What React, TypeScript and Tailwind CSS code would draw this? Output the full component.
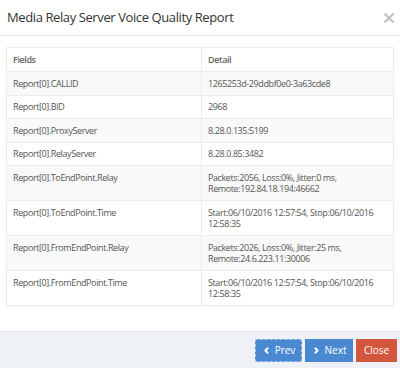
import { ChevronLeft, ChevronRight } from 'lucide-react';

const rows = [
  { f: 'Report[0].CALLID', d: '1265253d-29ddbf0e0-3a63cde8' },
  { f: 'Report[0].BID', d: '2968' },
  { f: 'Report[0].ProxyServer', d: '8.28.0.135:5199' },
  { f: 'Report[0].RelayServer', d: '8.28.0.85:3482' },
  { f: 'Report[0].ToEndPoint.Relay', d: 'Packets:2056, Loss:0%, Jitter:0 ms, Remote:192.84.18.194:46662' },
  { f: 'Report[0].ToEndPoint.Time', d: 'Start:06/10/2016 12:57:54, Stop:06/10/2016 12:58:35' },
  { f: 'Report[0].FromEndPoint.Relay', d: 'Packets:2026, Loss:0%, Jitter:25 ms, Remote:24.6.223.11:30006' },
  { f: 'Report[0].FromEndPoint.Time', d: 'Start:06/10/2016 12:57:54, Stop:06/10/2016 12:58:35' },
];

export default function App() {
  return (
    <div className="w-[400px] h-[368px] bg-white flex flex-col text-[#555] font-['Open_Sans',sans-serif] overflow-hidden">
      <div className="h-[36px] flex items-center justify-between pl-[7px] pr-[6px] border-b border-[#e8e8e8]">
        <h1 className="text-[13px] text-[#333] tracking-[-0.4px] pt-[1px]">Media Relay Server Voice Quality Report</h1>
        <svg width="12" height="12" viewBox="0 0 12 12" className="mr-[-1px]">
          <path d="M1.5 1.5 L10.5 10.5 M10.5 1.5 L1.5 10.5" stroke="#c4c4c4" strokeWidth="2.4" />
        </svg>
      </div>
      <div className="flex-1 px-[6px] pt-[11px]">
        <table className="w-full border border-[#ebebeb] border-collapse text-[9px] leading-[11.5px] tracking-[-0.4px]">
          <thead>
            <tr className="h-[24px]">
              <th className="w-[195px] text-left font-semibold text-[#666] px-[6px] border border-[#ebebeb]">Fields</th>
              <th className="text-left font-semibold text-[#666] px-[6px] border border-[#ebebeb]">Detail</th>
            </tr>
          </thead>
          <tbody>
            {rows.map((r, i) => (
              <tr key={i} className={i % 2 === 0 ? 'bg-[#f9f9f9]' : 'bg-white'}>
                <td className="align-top px-[6px] py-[5.5px] border border-[#ebebeb]">{r.f}</td>
                <td className="align-top px-[6px] py-[5.5px] border border-[#ebebeb]">{r.d}</td>
              </tr>
            ))}
          </tbody>
        </table>
      </div>
      <div className="h-[37px] bg-[#eef1f6] border-t border-[#e2e5eb] flex items-center justify-end gap-[3px] pr-[3px] pt-[1px]">
        <button className="w-[47px] h-[23px] bg-[#4a89d2] text-white text-[10px] flex items-center justify-center gap-[4px] outline-dashed outline-1 outline-[#a9c7ea] -outline-offset-1">
          <ChevronLeft size={9} strokeWidth={5} /> Prev
        </button>
        <button className="w-[48px] h-[23px] bg-[#4a89d2] text-white text-[10px] flex items-center justify-center gap-[4px]">
          <ChevronRight size={9} strokeWidth={5} /> Next
        </button>
        <button className="w-[41px] h-[23px] bg-[#d3573f] text-white text-[10px] flex items-center justify-center">
          Close
        </button>
      </div>
    </div>
  );
}
